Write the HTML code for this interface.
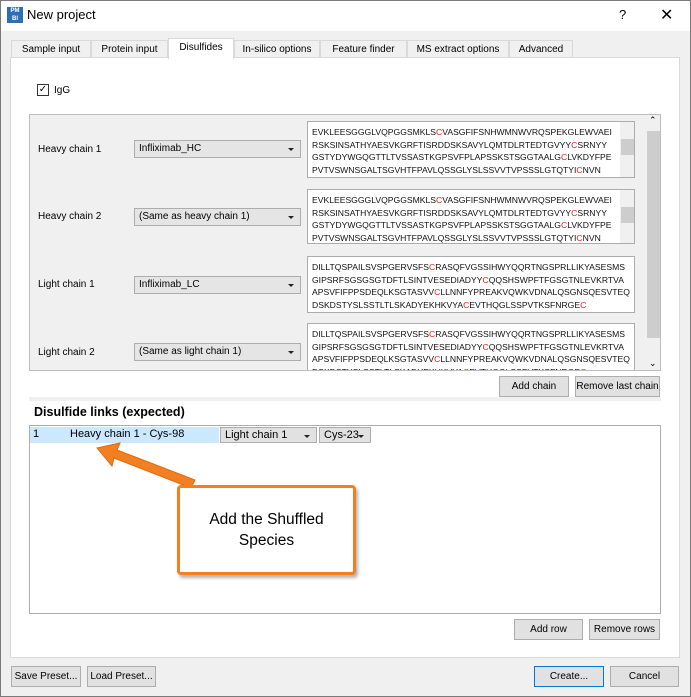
<!DOCTYPE html>
<html><head><style>
*{box-sizing:border-box;margin:0;padding:0}
body{width:691px;height:697px;background:#f0f0f0;font-family:"Liberation Sans",sans-serif;font-size:10px;color:#000;position:relative;overflow:hidden}
.a{position:absolute}
.win{left:0;top:0;width:691px;height:697px;border:1px solid #7a7a7a;background:#f0f0f0}
.title{left:1px;top:1px;width:689px;height:30px;background:#fff}
.tab{top:40px;height:18px;border:1px solid #d9d9d9;border-bottom:none;background:#f0f0f0;font-size:10px;text-align:center;line-height:17px}
.panel{left:10px;top:57px;width:670px;height:601px;background:#fff;border:1px solid #d9d9d9}
.btn{background:#e1e1e1;border:1px solid #adadad;text-align:center;font-size:10px;line-height:19px}
.combo{background:#e5e5e5;border:1px solid #adadad;font-size:10px;line-height:16px;padding-left:4px}
.combo:after{content:"";position:absolute;right:6px;top:7px;border-left:3px solid transparent;border-right:3px solid transparent;border-top:3px solid #222}
.seq{left:307px;width:328px;background:#fff;border:1px solid #acacac;font-size:8.6px;line-height:12.5px;padding:4px 0 0 4px;white-space:pre;overflow:hidden;color:#111}
.seq b{color:#e0201e;font-weight:normal}
.sb{position:absolute;right:0;top:0;width:14px;height:100%;background:#f0f0f0}
.lab{left:38px;font-size:10px}
</style></head><body>
<div class="a win"></div>
<div class="a title"></div>
<div class="a" style="left:7px;top:7px;width:16px;height:16px;background:#2c6fb6;color:#fff;font-size:6px;line-height:8px;text-align:center;font-weight:bold">PM<br>Bl</div>
<div class="a" style="left:27px;top:7px;font-size:13px">New project</div>
<div class="a" style="left:619px;top:7px;font-size:13px">?</div>
<div class="a" style="left:660px;top:5px;font-size:16px">✕</div>

<div class="a tab" style="left:11px;width:80px">Sample input</div>
<div class="a tab" style="left:91px;width:77px">Protein input</div>
<div class="a tab" style="left:168px;top:38px;height:21px;width:66px;background:#fff;z-index:2">Disulfides</div>
<div class="a tab" style="left:234px;width:86px">In-silico options</div>
<div class="a tab" style="left:320px;width:87px">Feature finder</div>
<div class="a tab" style="left:407px;width:102px">MS extract options</div>
<div class="a tab" style="left:509px;width:64px">Advanced</div>
<div class="a panel"></div>

<div class="a" style="left:37px;top:84px;width:12px;height:12px;border:1px solid #333;background:#fff;font-size:10px;line-height:10px;text-align:center">✓</div>
<div class="a" style="left:54px;top:85px">IgG</div>

<div class="a" style="left:29px;top:114px;width:632px;height:257px;border:1px solid #bdbdbd;background:#f0f0f0;overflow:hidden">
 <div class="sb" style="background:#f0f0f0"><div style="position:absolute;left:1px;top:16px;width:13px;height:207px;background:#cdcdcd"></div><div style="position:absolute;top:0;left:3px;font-size:9px">⌃</div><div style="position:absolute;bottom:1px;left:3px;font-size:9px">⌄</div></div>
</div>
<div class="a lab" style="top:144px">Heavy chain 1</div>
<div class="a combo" style="left:134px;top:140px;width:167px;height:18px">Infliximab_HC</div>
<div class="a lab" style="top:211px">Heavy chain 2</div>
<div class="a combo" style="left:134px;top:208px;width:167px;height:18px">(Same as heavy chain 1)</div>
<div class="a lab" style="top:279px">Light chain 1</div>
<div class="a combo" style="left:134px;top:276px;width:167px;height:18px">Infliximab_LC</div>
<div class="a lab" style="top:347px">Light chain 2</div>
<div class="a combo" style="left:134px;top:343px;width:167px;height:18px">(Same as light chain 1)</div>

<div class="a seq" style="top:121px;height:57px">EVKLEESGGGLVQPGGSMKLS<b>C</b>VASGFIFSNHWMNWVRQSPEKGLEWVAEI
RSKSINSATHYAESVKGRFTISRDDSKSAVYLQMTDLRTEDTGVYY<b>C</b>SRNYY
GSTYDYWGQGTTLTVSSASTKGPSVFPLAPSSKSTSGGTAALG<b>C</b>LVKDYFPE
PVTVSWNSGALTSGVHTFPAVLQSSGLYSLSSVVTVPSSSLGTQTYI<b>C</b>NVN<div class="sb"><div style="position:absolute;left:1px;top:17px;width:13px;height:16px;background:#cdcdcd"></div></div></div>
<div class="a seq" style="top:189px;height:55px">EVKLEESGGGLVQPGGSMKLS<b>C</b>VASGFIFSNHWMNWVRQSPEKGLEWVAEI
RSKSINSATHYAESVKGRFTISRDDSKSAVYLQMTDLRTEDTGVYY<b>C</b>SRNYY
GSTYDYWGQGTTLTVSSASTKGPSVFPLAPSSKSTSGGTAALG<b>C</b>LVKDYFPE
PVTVSWNSGALTSGVHTFPAVLQSSGLYSLSSVVTVPSSSLGTQTYI<b>C</b>NVN<div class="sb"><div style="position:absolute;left:1px;top:17px;width:13px;height:16px;background:#cdcdcd"></div></div></div>
<div class="a seq" style="top:256px;height:57px">DILLTQSPAILSVSPGERVSFS<b>C</b>RASQFVGSSIHWYQQRTNGSPRLLIKYASESMS
GIPSRFSGSGSGTDFTLSINTVESEDIADYY<b>C</b>QQSHSWPFTFGSGTNLEVKRTVA
APSVFIFPPSDEQLKSGTASVV<b>C</b>LLNNFYPREAKVQWKVDNALQSGNSQESVTEQ
DSKDSTYSLSSTLTLSKADYEKHKVYA<b>C</b>EVTHQGLSSPVTKSFNRGE<b>C</b></div>
<div class="a seq" style="top:323px;height:47px;border-bottom:none">DILLTQSPAILSVSPGERVSFS<b>C</b>RASQFVGSSIHWYQQRTNGSPRLLIKYASESMS
GIPSRFSGSGSGTDFTLSINTVESEDIADYY<b>C</b>QQSHSWPFTFGSGTNLEVKRTVA
APSVFIFPPSDEQLKSGTASVV<b>C</b>LLNNFYPREAKVQWKVDNALQSGNSQESVTEQ
DSKDSTYSLSSTLTLSKADYEKHKVYA<b>C</b>EVTHQGLSSPVTKSFNRGE<b>C</b></div>

<div class="a btn" style="left:499px;top:376px;width:70px;height:21px">Add chain</div>
<div class="a btn" style="left:575px;top:376px;width:85px;height:21px">Remove last chain</div>
<div class="a" style="left:29px;top:397px;width:632px;height:4px;background:#f0f0f0"></div>

<div class="a" style="left:34px;top:405px;font-size:12.5px;font-weight:bold">Disulfide links (expected)</div>
<div class="a" style="left:29px;top:425px;width:632px;height:189px;border:1px solid #adadad;background:#fff"></div>
<div class="a" style="left:30px;top:427px;width:189px;height:16px;background:#cce8ff"></div>
<div class="a" style="left:33px;top:428px;font-size:11px">1</div>
<div class="a" style="left:70px;top:428px;font-size:11px">Heavy chain 1 - Cys-98</div>
<div class="a combo" style="left:220px;top:427px;width:97px;height:16px;font-size:11px;line-height:14px;background:#e1e1e1">Light chain 1</div>
<div class="a combo" style="left:319px;top:427px;width:52px;height:16px;font-size:11px;line-height:14px;background:#e1e1e1">Cys-23</div>

<svg class="a" style="left:90px;top:440px" width="130" height="60"><polygon points="7,8 30,3 27,10 105,40 101,48 24,18 22,26" fill="#f28022" stroke="#e06a10" stroke-width="1"/></svg>
<div class="a" style="left:177px;top:485px;width:179px;height:90px;border:3px solid #f28022;border-radius:4px;background:#fff;box-shadow:2px 3px 3px rgba(0,0,0,.3);font-size:15.5px;text-align:center;line-height:21px;padding-top:21px">Add the Shuffled<br>Species</div>

<div class="a btn" style="left:514px;top:619px;width:69px;height:21px">Add row</div>
<div class="a btn" style="left:589px;top:619px;width:71px;height:21px">Remove rows</div>

<div class="a btn" style="left:11px;top:666px;width:70px;height:21px">Save Preset...</div>
<div class="a btn" style="left:87px;top:666px;width:69px;height:21px">Load Preset...</div>
<div class="a btn" style="left:534px;top:666px;width:70px;height:21px;border:1px solid #0078d7">Create...</div>
<div class="a btn" style="left:610px;top:666px;width:69px;height:21px">Cancel</div>
</body></html>
